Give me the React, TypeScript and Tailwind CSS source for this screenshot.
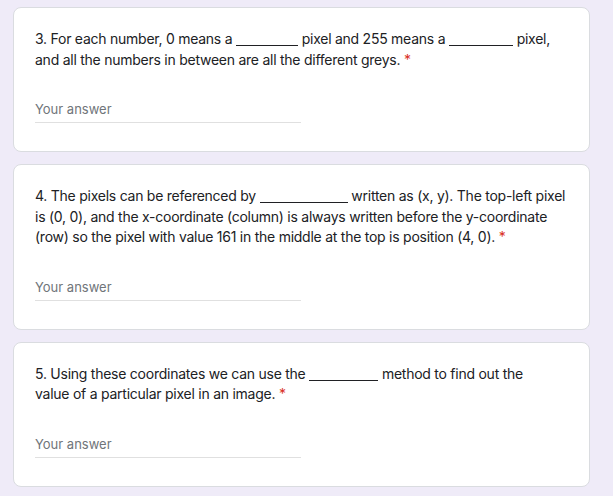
const Blank = ({ w }: { w: string }) => (
  <span className={`inline-block ${w} border-b border-[#202124] align-[-2px]`} />
)

export default function App() {
  return (
    <div
      className="w-[613px] h-[496px] bg-[#efebf8] pt-[7px] px-[13px] flex flex-col gap-[12px] overflow-hidden"
      style={{ fontFamily: 'Inter, "Noto Sans", sans-serif' }}
    >
      <Card>
        3. For each number, 0 means a <Blank w="w-[62px]" /> pixel and 255 means a <Blank w="w-[64px]" /> pixel,
        <br />
        and all the numbers in between are all the different greys.
      </Card>
      <Card>
        4. The pixels can be referenced by <Blank w="w-[88px]" /> written as (x, y). The top-left pixel
        <br />
        is (0, 0), and the x-coordinate (column) is always written before the y-coordinate
        <br />
        (row) so the pixel with value 161 in the middle at the top is position (4, 0).
      </Card>
      <Card>
        5. Using these coordinates we can use the <Blank w="w-[69px]" /> method to find out the
        <br />
        value of a particular pixel in an image.
      </Card>
    </div>
  )
}

function Card({ children }: { children: React.ReactNode }) {
  return (
    <div className="w-[577px] bg-white rounded-[8px] border border-[#dadce0] pt-[21px] pb-[28px] pl-[21px] pr-[10px]">
      <p className="text-[14px] leading-[20.5px] text-[#202124] tracking-[-0.25px] whitespace-nowrap">
        {children} <span className="text-[#d93025]">*</span>
      </p>
      <div className="mt-[26px] w-[266px] border-b border-[#e0e0e0] pb-[2px]">
        <span className="text-[13px] leading-[20px] text-[#70757a]">Your answer</span>
      </div>
    </div>
  )
}
